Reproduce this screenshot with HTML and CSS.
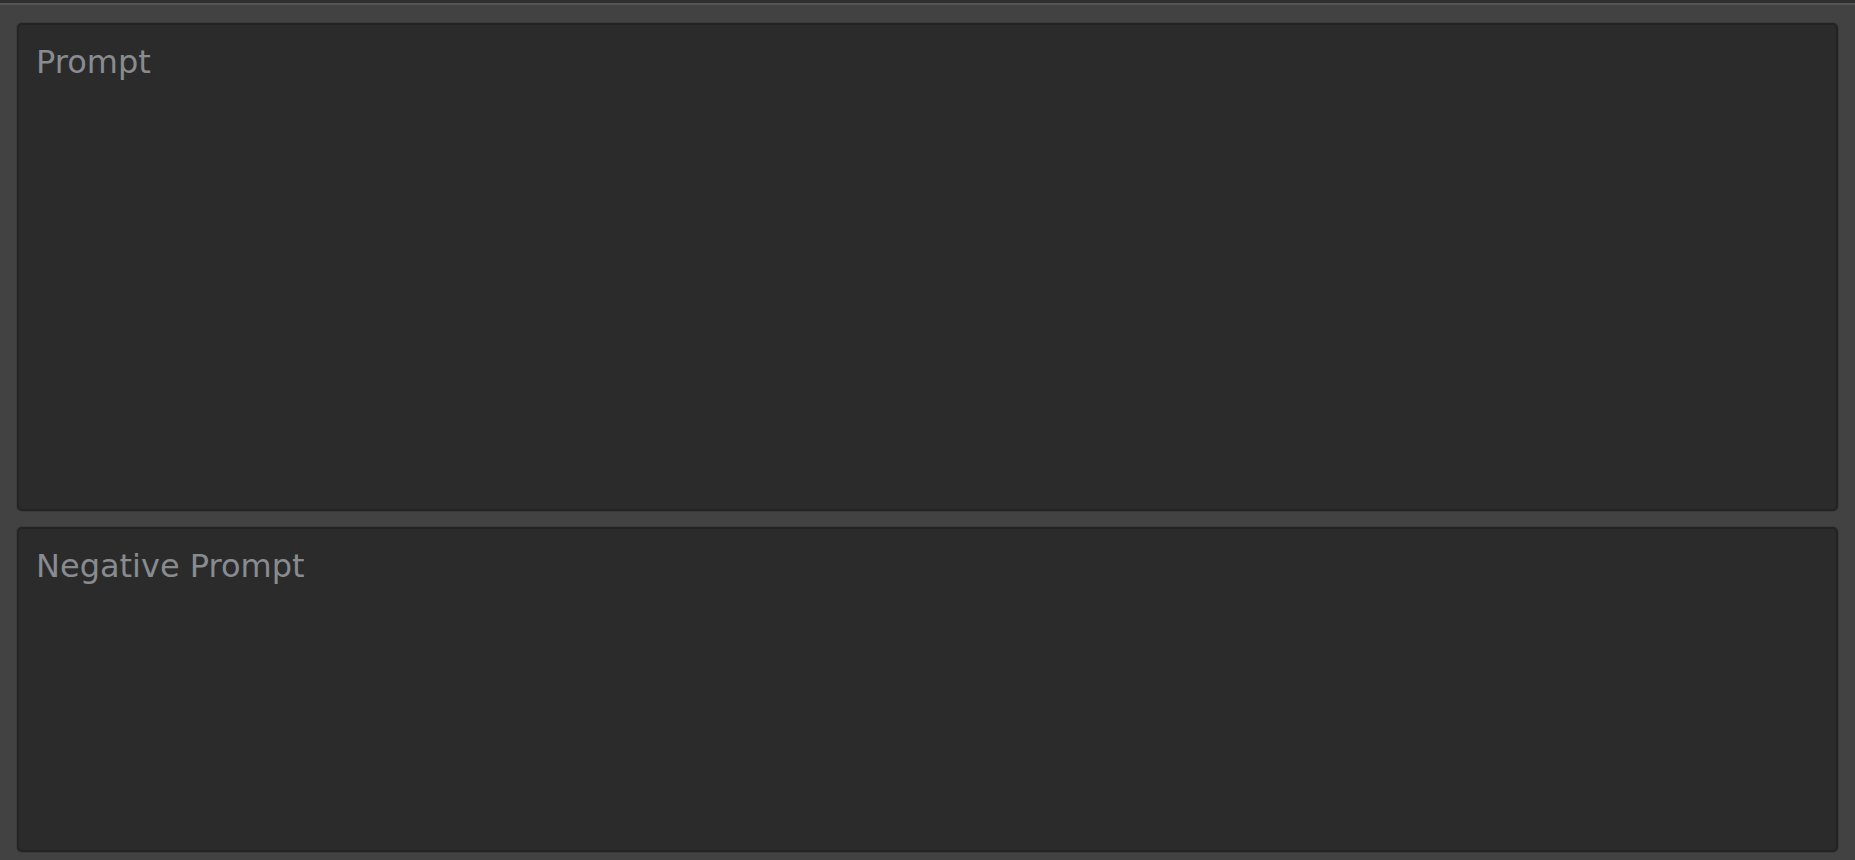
FILE: index.html
```html
<!DOCTYPE html>
<html lang="en">
<head>
<meta charset="utf-8">
<title>Prompt</title>
<link rel="stylesheet" href="styles.css">
</head>
<body>
<div class="topbar"></div>
<main class="panel">
  <div class="field field-prompt"><span class="placeholder">Prompt</span></div>
  <div class="field field-negative"><span class="placeholder">Negative Prompt</span></div>
</main>
</body>
</html>
```

FILE: styles.css
```css
html, body {
  margin: 0;
  padding: 0;
  height: 100%;
  background: #424242;
  overflow: hidden;
}

body {
  display: flex;
  flex-direction: column;
  font-family: "DejaVu Sans", "Noto Sans", sans-serif;
}

.topbar {
  height: 3px;
  background: #2f2f2f;
  border-bottom: 2px solid #555555;
  flex: none;
}

.panel {
  flex: 1;
  display: flex;
  flex-direction: column;
  gap: 16px;
  padding: 18px 17px 8px 17px;
  min-height: 0;
}

.field {
  box-sizing: border-box;
  background: #2b2b2b;
  border: 2px solid #232323;
  border-radius: 5px;
  box-shadow: 0 0 0 1px #3a3a3a;
  padding: 19px 17px;
}

.field-prompt {
  height: 488px;
  flex: none;
}

.field-negative {
  flex: 1;
}

.placeholder {
  display: block;
  color: #888b90;
  font-size: 32px;
  line-height: 36px;
}
```
